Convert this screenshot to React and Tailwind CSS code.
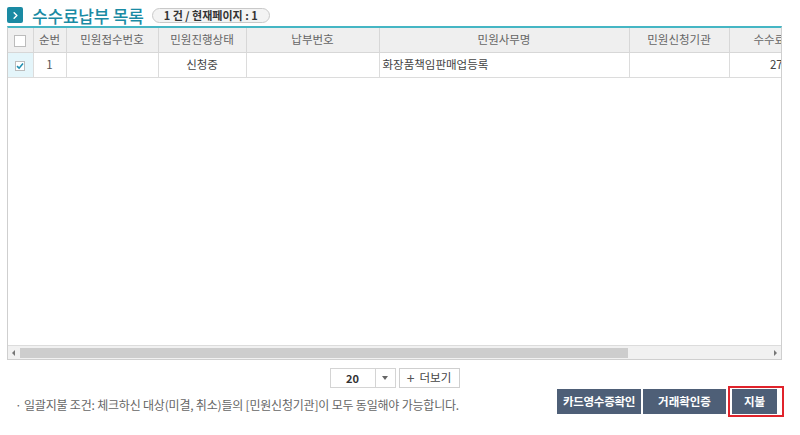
import React from 'react';
import { ChevronRight } from 'lucide-react';

const columns = [
  { key: 'chk', label: '', width: 25 },
  { key: 'no', label: '순번', width: 33 },
  { key: 'rcptNo', label: '민원접수번호', width: 92 },
  { key: 'status', label: '민원진행상태', width: 88 },
  { key: 'payNo', label: '납부번호', width: 133 },
  { key: 'affair', label: '민원사무명', width: 250 },
  { key: 'org', label: '민원신청기관', width: 100 },
  { key: 'fee', label: '수수료', width: 80 },
];

const rows = [
  { no: 1, rcptNo: '', status: '신청중', payNo: '', affair: '화장품책임판매업등록', org: '', fee: '27,000', checked: true },
];

const CheckBox = ({ checked, small }) => (
  <span
    className={
      'inline-flex items-center justify-center bg-white border border-[#bcbcbc] align-middle ' +
      (small ? 'w-[10px] h-[10px]' : 'w-[12px] h-[12px]')
    }
  >
    {checked && (
      <svg width="8" height="8" viewBox="0 0 8 8">
        <path d="M1 4.2 L3.1 6.2 L7 1.6" fill="none" stroke="#1f8fb0" strokeWidth="1.6" />
      </svg>
    )}
  </span>
);

export default function App() {
  return (
    <div
      className="w-[800px] h-[435px] bg-white pt-[7px] pl-[7px] pr-[18px] overflow-hidden"
      style={{ fontFamily: '"Noto Sans CJK KR", "Noto Sans", sans-serif' }}
    >
      {/* title */}
      <div className="flex items-center h-[16px]">
        <span className="w-[16px] h-[16px] rounded-[2px] bg-[#1a8aa3] flex items-center justify-center">
          <ChevronRight size={11} color="#fff" strokeWidth={3.2} />
        </span>
        <h2 className="ml-[9px] text-[17px] leading-none font-medium text-[#1a8ba4] tracking-[-0.2px]">수수료납부 목록</h2>
        <span className="ml-[8px] h-[15px] px-[11px] rounded-full border border-[#c9c9c9] bg-[#f3f3f3] text-[11px] leading-[13px] font-bold text-[#333]">
          1 건 / 현재페이지 : 1
        </span>
      </div>

      {/* grid */}
      <div className="mt-[3px] border-t-2 border-t-[#45b6c4] border-x border-b border-x-[#cfcfcf] border-b-[#cfcfcf]">
        <div className="h-[317px] overflow-hidden">
          <table className="table-fixed border-collapse text-[11.5px]" style={{ width: 801 }}>
            <colgroup>
              {columns.map(c => (
                <col key={c.key} style={{ width: c.width }} />
              ))}
            </colgroup>
            <thead>
              <tr className="h-[24px] bg-[#efefef]">
                {columns.map((c, i) => (
                  <th
                    key={c.key}
                    className={
                      'font-normal text-[#666] text-center whitespace-nowrap border-b border-[#d7d7d7] ' +
                      (i > 0 ? 'border-l border-l-[#d7d7d7]' : '')
                    }
                  >
                    {c.key === 'chk' ? <CheckBox /> : c.label}
                  </th>
                ))}
              </tr>
            </thead>
            <tbody>
              {rows.map(r => (
                <tr key={r.no} className="h-[25px] text-[#444] border-b border-[#dcdcdc]">
                  <td className="text-center bg-[#e4f5fa]"><CheckBox checked={r.checked} small /></td>
                  <td className="text-center text-[#555] border-l border-[#dcdcdc]">{r.no}</td>
                  <td className="border-l border-[#dcdcdc]">{r.rcptNo}</td>
                  <td className="text-center border-l border-[#dcdcdc]">{r.status}</td>
                  <td className="border-l border-[#dcdcdc]">{r.payNo}</td>
                  <td className="pl-[3px] text-left border-l border-[#dcdcdc] whitespace-nowrap">{r.affair}</td>
                  <td className="border-l border-[#dcdcdc]">{r.org}</td>
                  <td className="text-right pr-[4px] border-l border-[#dcdcdc] whitespace-nowrap">{r.fee}</td>
                </tr>
              ))}
            </tbody>
          </table>
        </div>

        {/* horizontal scrollbar */}
        <div className="h-[14px] border-t border-[#dcdcdc] bg-[#f1f1f1] flex items-center px-[4px] gap-[5px]">
          <span className="w-0 h-0 border-y-[3px] border-y-transparent border-r-[3px] border-r-[#777]" />
          <div className="flex-1 h-[10px] flex">
            <div className="w-[608px] h-full bg-[#cdcdcd]" />
          </div>
          <span className="w-0 h-0 border-y-[3px] border-y-transparent border-l-[3px] border-l-[#777]" />
        </div>
      </div>

      {/* paging */}
      <div className="mt-[8px] h-[20px] flex justify-center gap-[3px]">
        <div className="flex w-[66px] h-full border border-[#d4d4d4] bg-white">
          <span className="flex-1 flex items-center justify-center text-[11px] font-bold text-[#333]">20</span>
          <span className="w-[20px] border-l border-[#d4d4d4] flex items-center justify-center">
            <span className="w-0 h-0 border-x-[3px] border-x-transparent border-t-[4px] border-t-[#666]" />
          </span>
        </div>
        <button className="w-[61px] h-full border border-[#cfcfcf] bg-white text-[11.5px] text-[#444] flex items-center justify-center gap-[5px]">
          <span className="text-[14px] leading-none text-[#555]">+</span>
          더보기
        </button>
      </div>

      {/* notice + buttons */}
      <div className="-mt-[2px] h-[31px] flex items-center justify-between">
        <p className="pl-[8px] pt-[6px] text-[12px] text-[#666] tracking-[-0.2px] whitespace-nowrap">
          · 일괄지불 조건: 체크하신 대상(미결, 취소)들의 [민원신청기관]이 모두 동일해야 가능합니다.
        </p>
        <div className="flex items-center gap-[2px] -mr-[2px]">
          <button className="w-[84px] h-[25px] bg-[#4e5f77] text-white text-[11.5px] font-bold tracking-[-0.3px]">카드영수증확인</button>
          <button className="w-[83px] h-[25px] bg-[#4e5f77] text-white text-[11.5px] font-bold">거래확인증</button>
          <div className="w-[56px] h-[31px] border-2 border-[#e0232b] pl-[2px] pr-[3px] py-[1px] flex">
            <button className="flex-1 h-[25px] bg-[#4e5f77] text-white text-[11.5px] font-bold border-r-[2px] border-white">지불</button>
          </div>
        </div>
      </div>
    </div>
  );
}
